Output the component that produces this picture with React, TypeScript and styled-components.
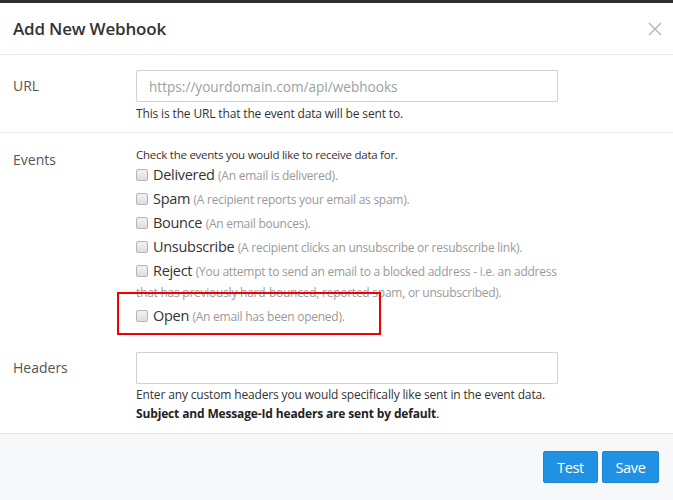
import React from 'react';
import styled, { createGlobalStyle } from 'styled-components';

const GlobalStyle = createGlobalStyle`
  html, body {
    margin: 0;
    padding: 0;
    background: #2f2f2f;
  }
  body {
    font-family: "Open Sans", "Noto Sans", sans-serif;
    color: #333333;
  }
  * {
    box-sizing: border-box;
  }
`;

const Modal = styled.div`
  margin-top: 3px;
  width: 673px;
  height: 497px;
  background: #ffffff;
  display: flex;
  flex-direction: column;
`;

const Header = styled.div`
  height: 52px;
  padding: 0 13px;
  border-bottom: 1px solid #e8e8e8;
  display: flex;
  align-items: center;
  justify-content: space-between;
`;

const Title = styled.h4`
  margin: 0;
  font-size: 17px;
  font-weight: 600;
  color: #333333;
  letter-spacing: -0.2px;
`;

const Close = styled.button`
  border: none;
  background: none;
  padding: 0;
  width: 14px;
  height: 14px;
  display: flex;
  margin-right: -2px;
  cursor: pointer;
`;

const Section = styled.div<{ $top: number; $bottom: number; $divider?: boolean }>`
  padding: ${(p) => p.$top}px 13px ${(p) => p.$bottom}px;
  border-bottom: ${(p) => (p.$divider ? '1px solid #ececec' : 'none')};
`;

const Row = styled.div<{ $gap?: number }>`
  display: flex;
  margin-top: ${(p) => p.$gap || 0}px;
`;

const Label = styled.div<{ $lh?: number }>`
  width: 123px;
  flex-shrink: 0;
  font-size: 14px;
  line-height: ${(p) => p.$lh || 32}px;
  color: #555555;
`;

const Field = styled.div`
  width: 424px;
`;

const Input = styled.input`
  display: block;
  width: 422px;
  height: 32px;
  padding: 0 12px;
  border: 1px solid #d2d2d2;
  border-radius: 1px;
  font-family: inherit;
  font-size: 13.6px;
  color: #333333;
  outline: none;
  &::placeholder {
    color: #a0a0a0;
  }
`;

const Help = styled.div<{ $bold?: boolean }>`
  font-size: 12px;
  line-height: 19px;
  color: ${(p) => (p.$bold ? '#222222' : '#333333')};
  font-weight: ${(p) => (p.$bold ? 700 : 400)};
  letter-spacing: -0.15px;
  span {
    font-weight: 400;
  }
`;

const Intro = styled.div`
  font-size: 11.5px;
  line-height: 18px;
  letter-spacing: -0.25px;
  color: #333333;
`;

const Item = styled.label`
  display: block;
  position: relative;
  line-height: 21px;
  margin-bottom: 3px;
  font-size: 14.5px;
  color: #333333;
  letter-spacing: -0.3px;
  input {
    appearance: none;
    width: 12px;
    height: 12px;
    margin: 0 5px 0 0;
    border: 1px solid #b5b5b5;
    border-radius: 2px;
    background: linear-gradient(#f2f2f2, #dcdcdc);
    vertical-align: -1px;
  }
`;

const Desc = styled.span`
  font-size: 12px;
  line-height: 1;
  color: #9a9a9a;
  letter-spacing: -0.25px;
`;

const Highlight = styled.div`
  position: absolute;
  left: -19px;
  top: -13px;
  width: 264px;
  height: 43px;
  border: 2.5px solid #f00000;
  pointer-events: none;
`;

const Footer = styled.div`
  flex: 1;
  background: #f7f8fa;
  border-top: 1px solid #e6e6e6;
  display: flex;
  justify-content: flex-end;
  align-items: flex-start;
  gap: 4px;
  padding: 17px 14px 0 0;
`;

const Button = styled.button<{ $w: number }>`
  width: ${(p) => p.$w}px;
  height: 32px;
  border: 1px solid #1a86d4;
  border-radius: 2px;
  background: #2192e3;
  color: #ffffff;
  font-family: inherit;
  font-size: 14.5px;
  letter-spacing: -0.3px;
  padding: 0;
  cursor: pointer;
`;

const events = [
  { name: 'Delivered', desc: '(An email is delivered).' },
  { name: 'Spam', desc: '(A recipient reports your email as spam).' },
  { name: 'Bounce', desc: '(An email bounces).' },
  { name: 'Unsubscribe', desc: '(A recipient clicks an unsubscribe or resubscribe link).' },
  {
    name: 'Reject',
    desc: '(You attempt to send an email to a blocked address - i.e. an address that has previously hard-bounced, reported spam, or unsubscribed).',
  },
];

const App = () => {
  return (
    <>
      <GlobalStyle />
      <Modal>
        <Header>
          <Title>Add New Webhook</Title>
          <Close aria-label="Close">
            <svg width="14" height="14" viewBox="0 0 14 14">
              <path d="M1 1L13 13M13 1L1 13" stroke="#b3b3b3" strokeWidth="1.4" fill="none" />
            </svg>
          </Close>
        </Header>

        <Section $top={15} $bottom={9} $divider>
          <Row>
            <Label>URL</Label>
            <Field>
              <Input placeholder="https://yourdomain.com/api/webhooks" />
              <Help style={{ marginTop: 2 }}>This is the URL that the event data will be sent to.</Help>
            </Field>
          </Row>
        </Section>

        <Section $top={13} $bottom={10}>
          <Row>
            <Label $lh={28}>Events</Label>
            <Field>
              <Intro>Check the events you would like to receive data for.</Intro>
              {events.map((e) => (
                <Item key={e.name}>
                  <input type="checkbox" />
                  {e.name} <Desc>{e.desc}</Desc>
                </Item>
              ))}
              <Item>
                <input type="checkbox" />
                Open <Desc>(An email has been opened).</Desc>
                <Highlight />
              </Item>
            </Field>
          </Row>
          <Row $gap={23}>
            <Label>Headers</Label>
            <Field>
              <Input />
              <Help style={{ marginTop: 1 }}>
                Enter any custom headers you would specifically like sent in the event data.
              </Help>
              <Help $bold>
                Subject and Message-Id headers are sent by default<span>.</span>
              </Help>
            </Field>
          </Row>
        </Section>

        <Footer>
          <Button $w={55}>Test</Button>
          <Button $w={57}>Save</Button>
        </Footer>
      </Modal>
    </>
  );
};

export default App;
